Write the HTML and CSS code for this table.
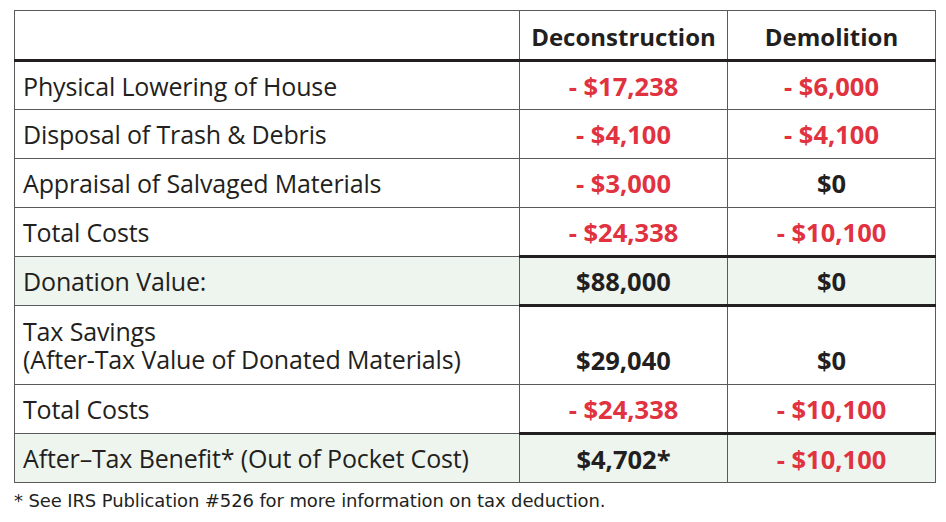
FILE: index.html
```html
<!DOCTYPE html>
<html lang="en">
<head>
<meta charset="utf-8">
<title>Deconstruction vs Demolition</title>
<link rel="stylesheet" href="styles.css">
</head>
<body>
<table class="cost-table">
  <colgroup>
    <col class="col-label">
    <col class="col-value">
    <col class="col-value">
  </colgroup>
  <thead>
    <tr class="row head">
      <th class="label"></th>
      <th class="value">Deconstruction</th>
      <th class="value">Demolition</th>
    </tr>
  </thead>
  <tbody>
    <tr class="row">
      <td class="label">Physical Lowering of House</td>
      <td class="value neg">- $17,238</td>
      <td class="value neg">- $6,000</td>
    </tr>
    <tr class="row">
      <td class="label">Disposal of Trash &amp; Debris</td>
      <td class="value neg">- $4,100</td>
      <td class="value neg">- $4,100</td>
    </tr>
    <tr class="row">
      <td class="label">Appraisal of Salvaged Materials</td>
      <td class="value neg">- $3,000</td>
      <td class="value">$0</td>
    </tr>
    <tr class="row">
      <td class="label">Total Costs</td>
      <td class="value neg">- $24,338</td>
      <td class="value neg">- $10,100</td>
    </tr>
    <tr class="row shaded boxed">
      <td class="label">Donation Value:</td>
      <td class="value">$88,000</td>
      <td class="value">$0</td>
    </tr>
    <tr class="row tall after-box">
      <td class="label"><span class="line">Tax Savings</span><span class="line">(After-Tax Value of Donated Materials)</span></td>
      <td class="value">$29,040</td>
      <td class="value">$0</td>
    </tr>
    <tr class="row">
      <td class="label">Total Costs</td>
      <td class="value neg">- $24,338</td>
      <td class="value neg">- $10,100</td>
    </tr>
    <tr class="row shaded boxed">
      <td class="label">After–Tax Benefit* (Out of Pocket Cost)</td>
      <td class="value">$4,702*</td>
      <td class="value neg">- $10,100</td>
    </tr>
  </tbody>
</table>
<p class="footnote">* See IRS Publication #526 for more information on tax deduction.</p>
</body>
</html>
```

FILE: styles.css
```css
html, body {
  margin: 0;
  padding: 0;
  background: #ffffff;
}

body {
  padding: 10px 0 0 14px;
  color: #231f20;
}

.cost-table {
  border-collapse: collapse;
  table-layout: fixed;
  width: 921px;
  font-family: "Open Sans", "Liberation Sans", sans-serif;
  font-size: 25px;
  border: 1.5px solid #4a4a4a;
}

.col-label { width: 505px; }
.col-value { width: 208px; }

.cost-table th,
.cost-table td {
  border: 1.5px solid #5a5a5a;
  padding: 0 8px;
  line-height: 28px;
  vertical-align: middle;
}

.row { height: 49px; }
.row.head { height: 50px; }
.row.tall { height: 79px; }

.row.head th {
  border-bottom: 3px solid #231f20;
  font-weight: 700;
  font-size: 24px;
  text-align: center;
  padding-top: 3px;
}

.label {
  text-align: left;
  font-weight: 400;
  letter-spacing: -0.15px;
}

.line {
  display: block;
  line-height: 28px;
}

.value {
  text-align: center;
  font-weight: 700;
  font-size: 25.5px;
}

.neg { color: #e0323f; }

.shaded td { background: #eef5ee; }

.boxed td.value { border-top: 3px solid #231f20; }
.after-box td.value { border-top: 3px solid #231f20; }

.row.tall td.value {
  vertical-align: bottom;
  padding-bottom: 10px;
}

.footnote {
  margin: 7px 0 0 0;
  font-family: "DejaVu Sans", "Liberation Sans", sans-serif;
  font-size: 18px;
  letter-spacing: -0.12px;
}
```
